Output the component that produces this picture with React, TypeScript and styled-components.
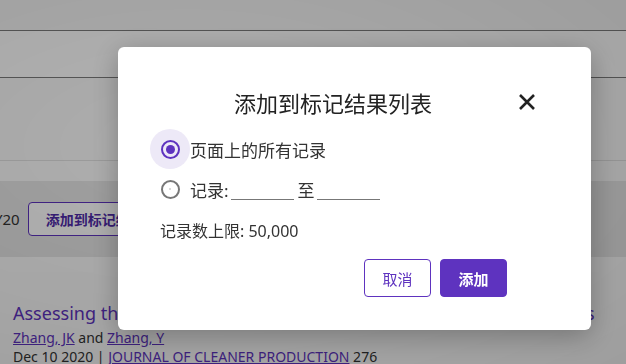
import React from "react";
import styled, { createGlobalStyle } from "styled-components";

const GlobalStyle = createGlobalStyle`
  html, body {
    margin: 0;
    padding: 0;
    width: 626px;
    height: 364px;
    overflow: hidden;
    background: #fafafa;
    font-family: "Noto Sans", "Noto Sans CJK SC", sans-serif;
  }
`;

const Page = styled.div`
  display: flex;
  flex-direction: column;
  width: 626px;
  & > * {
    flex-shrink: 0;
  }
`;

const TopBar = styled.div`
  height: 30px;
  background: #f6f6f6;
  border-bottom: 1px solid #7c7c7c;
`;

const SubBar = styled.div`
  height: 46px;
  background: #ffffff;
  border-bottom: 1px solid #7c7c7c;
`;

const Spacer = styled.div<{ h: number }>`
  height: ${(p) => p.h}px;
`;

const ToolbarSection = styled.div`
  border-top: 1px solid #e0e0e0;
  padding: 20px 0 15px;
  background: #fbfbfb;
`;

const Toolbar = styled.div`
  height: 76px;
  background: #e6e6e6;
  display: flex;
  align-items: center;
  gap: 8px;
`;

const Count = styled.span`
  font-size: 15px;
  color: #333;
  margin-left: -6px;
`;

const OutlineButton = styled.button`
  height: 34px;
  padding: 0 17px;
  border: 1px solid #5e33bf;
  border-radius: 4px;
  background: #fff;
  color: #4f2ba8;
  font-weight: 700;
  font-size: 14px;
  font-family: inherit;
  white-space: nowrap;
`;

const Results = styled.div`
  padding: 27px 0 0 13px;
  display: flex;
  flex-direction: column;
`;

const ResultTitle = styled.div`
  font-size: 18px;
  color: #5e33bf;
  white-space: nowrap;
  line-height: 28px;
`;

const Meta = styled.div<{ gap?: number }>`
  font-size: 14px;
  color: #333;
  line-height: 19px;
  margin-top: ${(p) => p.gap ?? 0}px;
  white-space: nowrap;
`;

const Link = styled.a`
  color: #5e33bf;
  text-decoration: underline;
`;

const Overlay = styled.div`
  position: fixed;
  inset: 0;
  background: radial-gradient(ellipse at 30% 40%, rgba(0, 0, 0, 0.3), rgba(0, 0, 0, 0.37));
`;

const Modal = styled.div`
  margin: 47px 0 0 118px;
  width: 473px;
  height: 283px;
  background: #fff;
  border-radius: 6px;
  box-shadow: 0 6px 28px rgba(0, 0, 0, 0.28);
  display: flex;
  flex-direction: column;
  box-sizing: border-box;
  padding: 40px 55px 0 32px;
`;

const Header = styled.div`
  display: flex;
  align-items: center;
  justify-content: space-between;
  padding-left: 84px;
  height: 30px;
`;

const Title = styled.h2`
  margin: 0;
  font-size: 22px;
  font-weight: 400;
  color: #222;
`;

const Close = styled.button`
  border: none;
  background: none;
  padding: 0;
  width: 18px;
  height: 18px;
  display: flex;
`;

const Options = styled.div`
  display: flex;
  flex-direction: column;
  margin-top: 12px;
`;

const OptionRow = styled.label`
  display: flex;
  align-items: center;
  height: 40px;
  font-size: 17px;
  color: #333;
`;

const RadioWrap = styled.span<{ checked?: boolean }>`
  width: 40px;
  height: 40px;
  border-radius: 50%;
  display: flex;
  align-items: center;
  justify-content: center;
  background: ${(p) => (p.checked ? "#ede9f7" : "transparent")};
  flex-shrink: 0;
`;

const RadioDot = styled.span<{ checked?: boolean }>`
  width: 19px;
  height: 19px;
  box-sizing: border-box;
  border-radius: 50%;
  border: 2px solid ${(p) => (p.checked ? "#5e33bf" : "#777")};
  display: flex;
  align-items: center;
  justify-content: center;
  &::after {
    content: "";
    width: ${(p) => (p.checked ? 9 : 2)}px;
    height: ${(p) => (p.checked ? 9 : 2)}px;
    border-radius: 50%;
    background: ${(p) => (p.checked ? "#5e33bf" : "#ccc")};
  }
`;

const RangeInput = styled.span`
  display: inline-block;
  width: 63px;
  height: 20px;
  border-bottom: 1px solid #777;
  margin: 0 4px 0 2px;
`;

const Limit = styled.div`
  font-size: 16px;
  color: #333;
  margin: 9px 0 0 10px;
`;

const Actions = styled.div`
  display: flex;
  justify-content: flex-end;
  gap: 9px;
  margin: 17px 29px 0 0;
`;

const ActionButton = styled.button<{ primary?: boolean }>`
  width: 67px;
  height: 38px;
  border-radius: 4px;
  font-family: inherit;
  font-size: 15px;
  font-weight: ${(p) => (p.primary ? 700 : 400)};
  border: 1px solid #5e33bf;
  background: ${(p) => (p.primary ? "#5e33bf" : "#fff")};
  color: ${(p) => (p.primary ? "#fff" : "#5e33bf")};
`;

export default function App() {
  return (
    <>
      <GlobalStyle />
      <Page>
        <TopBar />
        <SubBar />
        <Spacer h={82} />
        <ToolbarSection>
          <Toolbar>
            <Count>Y20</Count>
            <OutlineButton>添加到标记结果列表</OutlineButton>
          </Toolbar>
        </ToolbarSection>
        <Results>
          <ResultTitle>
            Assessing the impacts of urban agglomerations on carbon emissions
          </ResultTitle>
          <Meta gap={1}>
            <Link>Zhang, JK</Link> and <Link>Zhang, Y</Link>
          </Meta>
          <Meta>
            Dec 10 2020 | <Link>JOURNAL OF CLEANER PRODUCTION</Link> 276
          </Meta>
        </Results>
      </Page>
      <Overlay>
        <Modal>
          <Header>
            <Title>添加到标记结果列表</Title>
            <Close aria-label="close">
              <svg width="18" height="18" viewBox="0 0 18 18">
                <path d="M2 2 L16 16 M16 2 L2 16" stroke="#222" strokeWidth="2.6" />
              </svg>
            </Close>
          </Header>
          <Options>
            <OptionRow>
              <RadioWrap checked>
                <RadioDot checked />
              </RadioWrap>
              页面上的所有记录
            </OptionRow>
            <OptionRow>
              <RadioWrap>
                <RadioDot />
              </RadioWrap>
              记录:
              <RangeInput />至
              <RangeInput />
            </OptionRow>
          </Options>
          <Limit>记录数上限: 50,000</Limit>
          <Actions>
            <ActionButton>取消</ActionButton>
            <ActionButton primary>添加</ActionButton>
          </Actions>
        </Modal>
      </Overlay>
    </>
  );
}
